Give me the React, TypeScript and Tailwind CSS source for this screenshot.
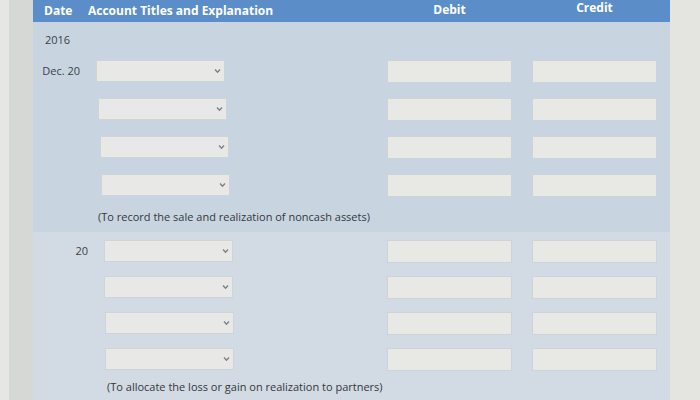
import React from "react";

const font = { fontFamily: '"Open Sans", "Noto Sans", sans-serif' };

function Chevron() {
  return (
    <svg width="7" height="5" viewBox="0 0 7 5" className="absolute right-[3px] top-1/2 -translate-y-1/2">
      <path d="M1 1 L3.5 3.8 L6 1" fill="none" stroke="#7c8288" strokeWidth="1.4" />
    </svg>
  );
}

function Select({ w = 129 }: { w?: number }) {
  return (
    <div className="relative h-[22px] bg-[#e8e9e6] border border-[#cfd4d8]" style={{ width: w }}>
      <Chevron />
    </div>
  );
}

function Amount() {
  return <div className="h-[23px] w-[125px] bg-[#e8e9e5] border border-[#cdd3d8]" />;
}

function Row({ date, selPad }: { date?: string; selPad: number }) {
  return (
    <div className="flex items-center h-[22px]">
      <div className="flex justify-end items-center text-[11px] text-[#3c3f44]" style={{ width: selPad }}>
        {date && <span className="pr-[16px]">{date}</span>}
      </div>
      <Select />
      <div className="flex-1" />
      <Amount />
      <div className="w-[20px]" />
      <Amount />
      <div className="w-[13px]" />
    </div>
  );
}

export default function App() {
  return (
    <div className="w-[700px] h-[400px] flex bg-[#e3e4e1] overflow-hidden" style={font}>
      <div className="w-[33px] h-full flex">
        <div className="w-[9px] bg-[#e6e7e4]" />
        <div className="flex-1 bg-[#d6d8d6]" />
      </div>
      <div className="w-[637px] h-full flex flex-col">
        <div className="h-[22px] bg-[#5b8ec8] flex items-center text-white font-bold text-[12px]">
          <span className="pl-[11px] w-[55px]">Date</span>
          <span>Account Titles and Explanation</span>
          <div className="flex-1" />
          <span className="w-[125px] text-center -mt-[3px]">Debit</span>
          <div className="w-[20px]" />
          <span className="w-[125px] text-center -mt-[6px]">Credit</span>
          <div className="w-[13px]" />
        </div>
        <div className="h-[210px] bg-[#c8d5e1] flex flex-col">
          <div className="h-[36px] flex items-center pl-[12px] text-[11px] text-[#3c3f44]">2016</div>
          <div className="mt-[2px] flex flex-col gap-[16px]">
            <Row date="Dec. 20" selPad={63} />
            <Row selPad={65} />
            <Row selPad={67} />
            <Row selPad={68} />
          </div>
          <div className="mt-[11px] h-[20px] flex items-center pl-[65px] text-[11px] text-[#34373c]">
            (To record the sale and realization of noncash assets)
          </div>
        </div>
        <div className="h-[168px] bg-[#d2dbe3] flex flex-col">
          <div className="mt-[8px] flex flex-col gap-[14px]">
            <Row date="20" selPad={71} />
            <Row selPad={71} />
            <Row selPad={72} />
            <Row selPad={72} />
          </div>
          <div className="mt-[7px] h-[20px] flex items-center pl-[74px] text-[11px] text-[#34373c]">
            (To allocate the loss or gain on realization to partners)
          </div>
        </div>
      </div>
      <div className="flex-1 bg-[#e4e4e0]" />
    </div>
  );
}
